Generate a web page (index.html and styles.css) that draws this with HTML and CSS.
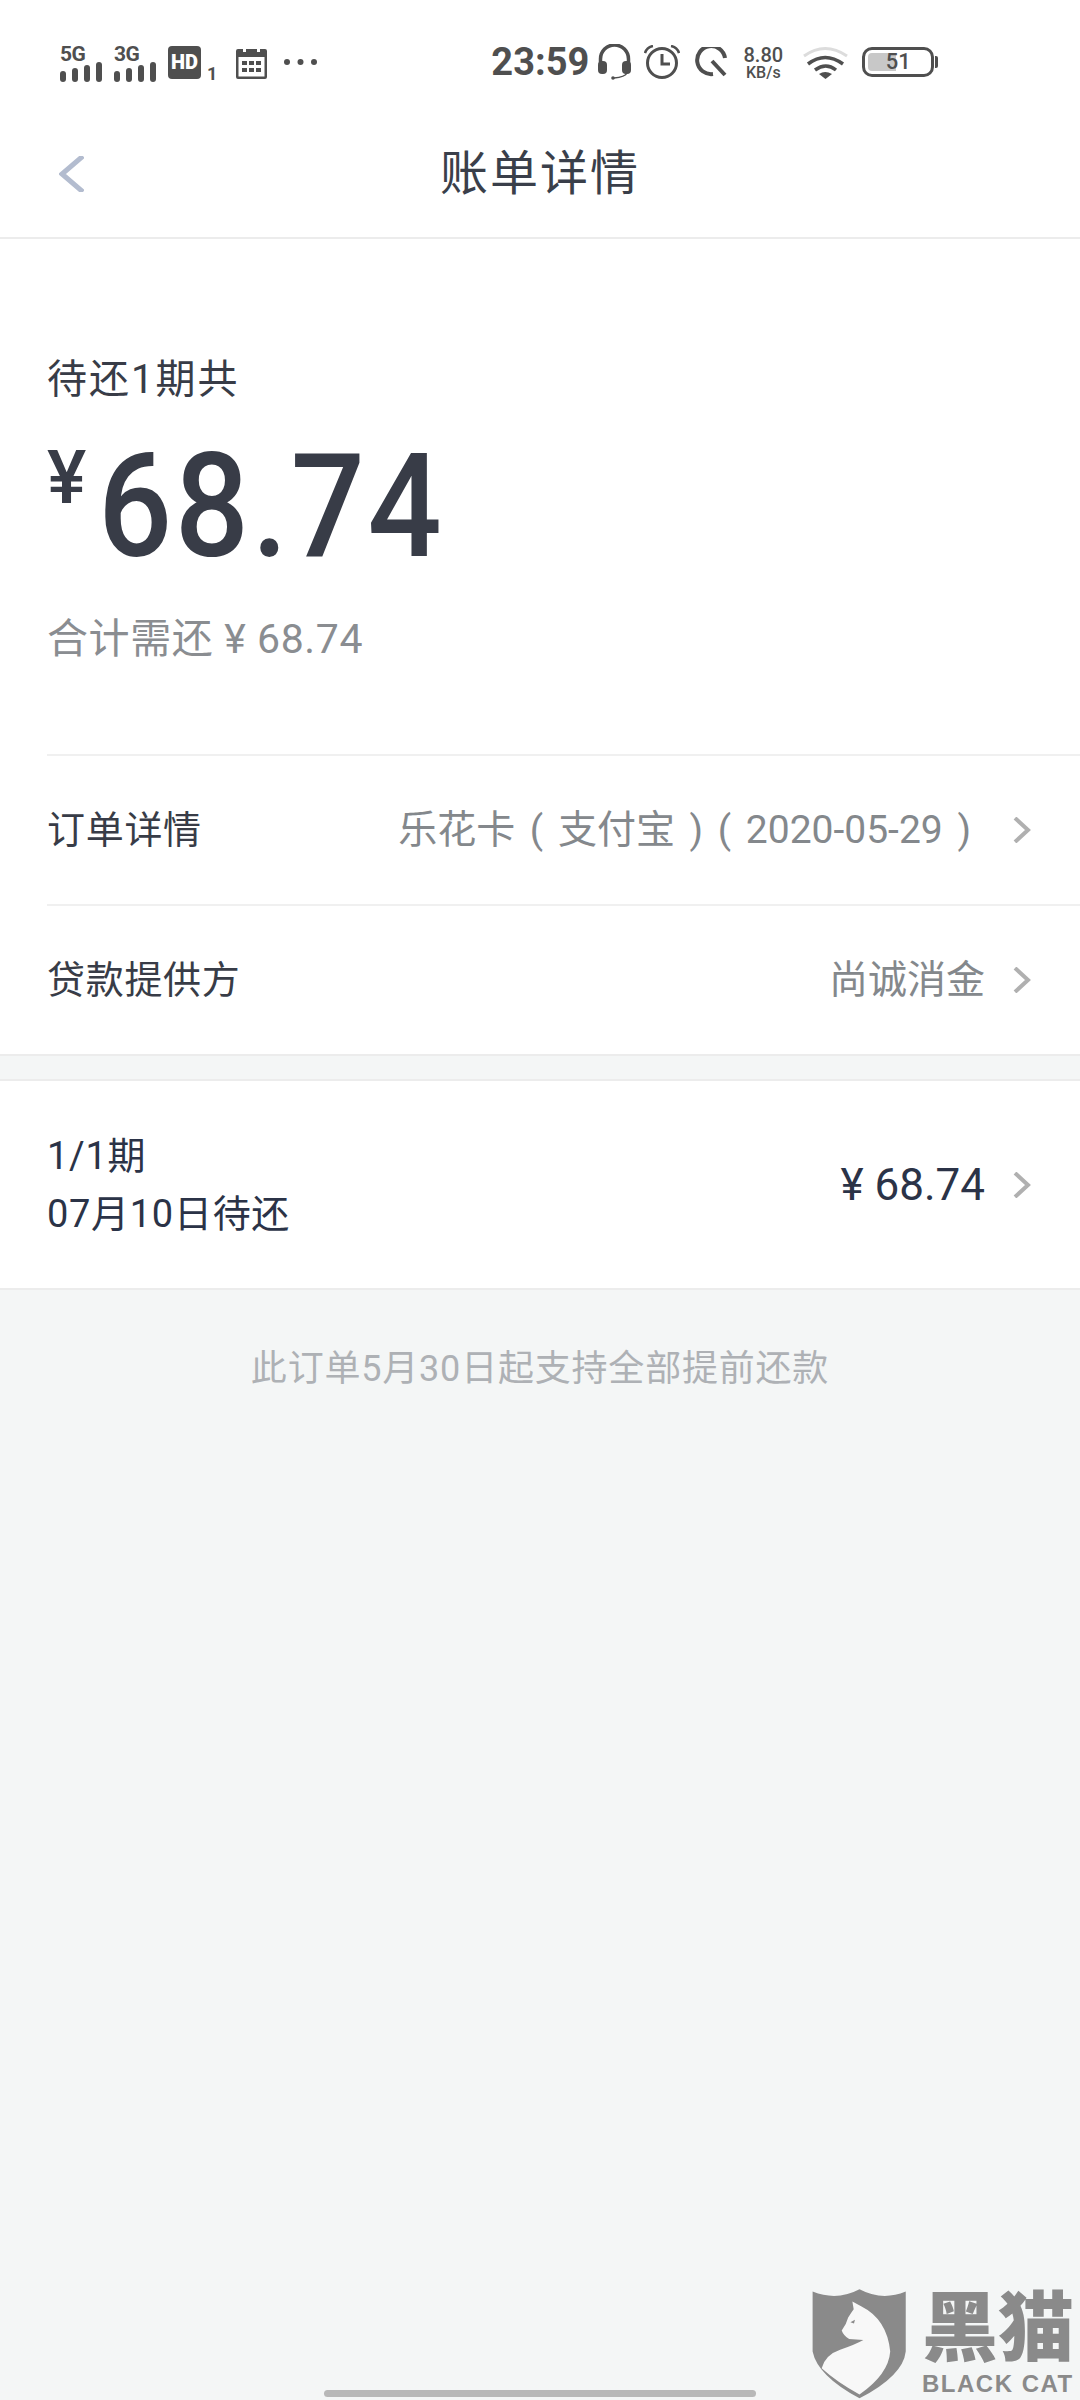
FILE: index.html
```html
<!DOCTYPE html>
<html lang="zh-CN">
<head>
<meta charset="UTF-8">
<meta name="viewport" content="width=device-width, initial-scale=1.0">
<title>账单详情</title>
<link rel="stylesheet" href="styles.css">
</head>
<body>

<div class="page">
  <div class="status-bar">
    <div class="signal">
      <span class="signal-label">5G</span>
      <svg width="42" height="20" viewBox="0 0 42 20"><rect x="0" y="9" width="6" height="11" rx="3"/><rect x="12" y="6" width="6" height="14" rx="3"/><rect x="24" y="3" width="6" height="17" rx="3"/><rect x="36" y="0" width="6" height="20" rx="3"/></svg>
    </div>
    <div class="signal">
      <span class="signal-label">3G</span>
      <svg width="42" height="20" viewBox="0 0 42 20"><rect x="0" y="9" width="6" height="11" rx="3"/><rect x="12" y="6" width="6" height="14" rx="3"/><rect x="24" y="3" width="6" height="17" rx="3"/><rect x="36" y="0" width="6" height="20" rx="3"/></svg>
    </div>
    <div class="hd">HD</div>
    <span class="hd-sub">1</span>
    <svg class="calendar" width="33" height="33" viewBox="0 0 33 33">
      <path d="M3 3h5v3h3V3h11v3h3V3h5a2 2 0 0 1 2 2v26a2 2 0 0 1-2 2H3a2 2 0 0 1-2-2V5a2 2 0 0 1 2-2z" fill="#4f4f4f"/>
      <rect x="3.500" y="11" width="26" height="19.500" fill="#fff"/>
      <rect x="7" y="15" width="5" height="4" fill="#4f4f4f"/><rect x="14" y="15" width="5" height="4" fill="#4f4f4f"/><rect x="21" y="15" width="5" height="4" fill="#4f4f4f"/>
      <rect x="7" y="22" width="5" height="4" fill="#4f4f4f"/><rect x="14" y="22" width="5" height="4" fill="#4f4f4f"/><rect x="21" y="22" width="5" height="4" fill="#4f4f4f"/>
    </svg>
    <svg class="dots" width="33" height="6" viewBox="0 0 33 6"><circle cx="3" cy="3" r="3"/><circle cx="16.500" cy="3" r="3"/><circle cx="30" cy="3" r="3"/></svg>

    <span class="time">23:59</span>
    <svg class="headset" width="33" height="36" viewBox="0 0 33 36" fill="none" stroke="#4f4f4f">
      <path d="M2.500 20v-5a14 14 0 0 1 28 0v5" stroke-width="3.500"/>
      <rect x="0" y="17" width="9" height="13" rx="4" fill="#4f4f4f" stroke="none"/>
      <rect x="24" y="17" width="9" height="13" rx="4" fill="#4f4f4f" stroke="none"/>
      <path d="M29 29q-2 4-13 5" stroke-width="1.500"/>
      <circle cx="15" cy="34" r="1.800" fill="#4f4f4f" stroke="none"/>
    </svg>
    <svg class="alarm" width="36" height="34" viewBox="0 0 36 34" fill="none" stroke="#4f4f4f">
      <circle cx="18" cy="18" r="14.500" stroke-width="3"/>
      <path d="M18 9v10h8" stroke-width="3"/>
      <path d="M1 8q2-6 8-7M35 8q-2-6-8-7" stroke-width="2.500"/>
    </svg>
    <svg class="rotate" width="33" height="30" viewBox="0 0 33 30" fill="none" stroke="#4f4f4f" stroke-width="4">
      <path d="M31 11A14 14 0 1 0 19 27"/>
      <path d="M18 14l13 14"/>
    </svg>
    <div class="speed">
      <span class="speed-value">8.80</span>
      <span class="speed-unit">KB/s</span>
    </div>
    <svg class="wifi" width="47" height="33" viewBox="0 0 47 33" fill="none">
      <path d="M2 10q21-15 43 0" stroke="#dcdcdc" stroke-width="3"/>
      <path d="M6 18q17-13 35 0" stroke="#4f4f4f" stroke-width="3.500"/>
      <path d="M13 24q11-8 21 0" stroke="#4f4f4f" stroke-width="3.500"/>
      <path d="M17 28q6-4 13 0l-6.500 5z" fill="#4f4f4f"/>
    </svg>
    <div class="battery">
      <div class="battery-fill"></div>
      <span class="battery-level">51</span>
    </div>
    <span class="battery-nub"></span>
  </div>

  <div class="nav-bar">
    <svg class="back" width="25" height="36" viewBox="0 0 25 36" fill="none"><path d="M24 0L3 18l21 18" stroke="#b3bccf" stroke-width="5"/></svg>
    <div class="nav-title">账单详情</div>
  </div>

  <div class="summary">
    <div class="summary-label">待还1期共</div>
    <div class="amount">
      <span class="amount-sign">¥</span>
      <span class="amount-value">68.74</span>
    </div>
    <div class="summary-total">合计需还 ¥ 68.74</div>
  </div>

  <div class="detail-list">
    <div class="detail-row">
      <span class="row-label">订单详情</span>
      <span class="row-value order-value">乐花卡 ( 支付宝 ) ( 2020-05-29 )</span>
      <svg class="chevron" width="18" height="26" viewBox="0 0 18 26" fill="none"><path d="M2 1l13 12L2 25" stroke="#b0b0b0" stroke-width="4"/></svg>
    </div>
    <div class="detail-row">
      <span class="row-label">贷款提供方</span>
      <span class="row-value">尚诚消金</span>
      <svg class="chevron" width="18" height="26" viewBox="0 0 18 26" fill="none"><path d="M2 1l13 12L2 25" stroke="#b0b0b0" stroke-width="4"/></svg>
    </div>
  </div>

  <div class="plan">
    <div class="plan-info">
      <div>1/1期</div>
      <div>07月10日待还</div>
    </div>
    <span class="plan-amount">¥ 68.74</span>
    <svg class="chevron" width="18" height="26" viewBox="0 0 18 26" fill="none"><path d="M2 1l13 12L2 25" stroke="#b0b0b0" stroke-width="4"/></svg>
  </div>

  <p class="note">此订单5月30日起支持全部提前还款</p>

  <div class="watermark">
    <svg class="shield" width="97" height="113" viewBox="90 70 300 345">
      <path d="M95 85Q170 115 240 78Q310 115 383 85L383 270Q375 345 240 415Q110 345 95 270Z" fill="#8a8a8a"/>
      <path d="M218 116L245 130Q325 170 335 270Q330 340 240 403Q170 365 123 322Q135 280 180 265Q225 250 252 235L208 232Q190 220 185 205Q200 185 205 165Q215 150 222 140Z" fill="#f8f8f8"/>
      <path d="M212 180l14-8-3 12z" fill="#8a8a8a"/>
    </svg>
    <div class="brand">
      <span class="brand-cn">黑猫</span>
      <span class="brand-en">BLACK CAT</span>
    </div>
  </div>
  <div class="home-bar"></div>
</div>

</body>
</html>
```

FILE: styles.css
```css
body {
  margin: 0;
  padding: 0;
  background-color: #f4f6f6;
  font-family: 'Roboto', 'Noto Sans CJK SC', sans-serif;
}

.page {
  position: relative;
  width: 1080px;
  height: 2400px;
  overflow: hidden;
}

/* status bar */
.status-bar {
  display: flex;
  align-items: center;
  height: 124px;
  padding-left: 60px;
  box-sizing: border-box;
  background: #fff;
  color: #4f4f4f;
}

.signal {
  display: flex;
  flex-direction: column;
  width: 42px;
  margin-right: 12px;
  margin-top: 4px;
}

.signal svg {
  fill: #4f4f4f;
}

.signal-label {
  font-size: 21px;
  line-height: 15px;
  font-weight: 700;
  letter-spacing: -0.5px;
}

.hd {
  width: 33px;
  height: 33px;
  background: #4f4f4f;
  border-radius: 4px;
  color: #fff;
  font-size: 20px;
  font-weight: 900;
  line-height: 33px;
  text-align: center;
}

.hd-sub {
  align-self: flex-end;
  margin: 0 0 43px 6px;
  font-size: 18px;
  line-height: 14px;
  font-weight: 700;
}

.calendar {
  margin-left: 18px;
}

.dots {
  margin-left: 16px;
  fill: #4f4f4f;
}

.time {
  width: 96px;
  margin-left: 174px;
  font-size: 38px;
  font-weight: 700;
  line-height: 1;
}

.headset {
  margin-left: 11px;
}

.alarm {
  margin-left: 13px;
}

.rotate {
  margin-left: 14px;
}

.speed {
  display: flex;
  flex-direction: column;
  align-items: center;
  width: 42px;
  margin-left: 15px;
  font-weight: 500;
}

.speed-value {
  font-size: 20px;
  line-height: 20px;
}

.speed-unit {
  font-size: 16px;
  line-height: 15px;
}

.wifi {
  margin-left: 18px;
}

.battery {
  position: relative;
  width: 72px;
  height: 30px;
  margin-left: 13px;
  box-sizing: border-box;
  border: 3px solid #4f4f4f;
  border-radius: 10px;
  overflow: hidden;
  text-align: center;
}

.battery-fill {
  position: absolute;
  left: 3px;
  top: 3px;
  bottom: 3px;
  width: 28px;
  background: #c8c8c8;
  border-radius: 4px 0 0 4px;
}

.battery-level {
  position: relative;
  font-size: 22px;
  line-height: 24px;
  font-weight: 500;
}

.battery-nub {
  width: 3px;
  height: 12px;
  margin-left: 1px;
  background: #4f4f4f;
  border-radius: 0 2px 2px 0;
}

/* nav */
.nav-bar {
  position: relative;
  display: flex;
  align-items: center;
  justify-content: center;
  height: 115px;
  padding-bottom: 14px;
  box-sizing: border-box;
  background: #fff;
  border-bottom: 2px solid #ececec;
}

.back {
  position: absolute;
  left: 59px;
  top: 32px;
}

.nav-title {
  font-size: 48px;
  line-height: 60px;
  color: #3a3f4a;
  letter-spacing: 2px;
}

/* summary */
.summary {
  height: 515px;
  padding: 114px 0 0 47px;
  box-sizing: border-box;
  background: #fff;
  color: #383c47;
}

.summary-label {
  font-size: 40px;
  line-height: 54px;
  letter-spacing: 2px;
}

.amount {
  display: flex;
  align-items: flex-start;
  height: 205px;
}

.amount-sign {
  margin-top: 29px;
  font-size: 74px;
  line-height: 84px;
  font-weight: 500;
}

.amount-value {
  margin-left: 12px;
  margin-top: 4px;
  font-size: 145px;
  line-height: 190px;
  font-weight: 500;
  letter-spacing: 3px;
  transform: scaleX(0.9);
  transform-origin: left center;
}

.summary-total {
  font-size: 41px;
  line-height: 54px;
  color: #8a8d91;
  letter-spacing: 0.600px;
}

/* rows */
.detail-list {
  padding-left: 47px;
  background: #fff;
  border-bottom: 2px solid #ececec;
}

.detail-row {
  display: flex;
  align-items: center;
  height: 150px;
  box-sizing: border-box;
  padding: 0 49px 8px 0;
  border-top: 2px solid #f0f0f0;
}

.row-label {
  flex: 1;
  font-size: 38px;
  color: #383c47;
  letter-spacing: 0.700px;
}

.row-value {
  font-size: 39px;
  color: #84888c;
  word-spacing: 5px;
}

.order-value {
  margin-right: 14px;
}

.chevron {
  margin-left: 28px;
  position: relative;
  top: 4px;
}

.plan {
  display: flex;
  align-items: center;
  height: 211px;
  margin-top: 23px;
  padding: 0 49px 0 47px;
  box-sizing: border-box;
  background: #fff;
  border-top: 2px solid #ececec;
  border-bottom: 2px solid #ececec;
  color: #2b3347;
}

.plan .chevron {
  top: 0;
}

.plan-info {
  flex: 1;
  font-size: 38px;
  line-height: 58px;
  letter-spacing: 0.700px;
}

.plan-amount {
  font-size: 44px;
}

.note {
  margin: 52px 0 0;
  font-size: 36px;
  line-height: 54px;
  text-align: center;
  color: #aeb1b5;
  letter-spacing: 0.800px;
}

/* overlays */
.watermark {
  position: absolute;
  left: 811px;
  top: 2286px;
  display: flex;
}

.brand {
  display: flex;
  flex-direction: column;
  margin-left: 14px;
  color: #8a8a8a;
}

.brand-cn {
  height: 86px;
  font-size: 76px;
  line-height: 86px;
  font-weight: 900;
}

.brand-en {
  font-family: 'Liberation Sans', sans-serif;
  font-size: 24px;
  line-height: 24px;
  font-weight: 700;
  letter-spacing: 1.500px;
  white-space: nowrap;
}

.home-bar {
  position: absolute;
  left: 324px;
  top: 2390px;
  width: 432px;
  height: 7px;
  background: #b8b8b8;
  border-radius: 4px;
}
```
